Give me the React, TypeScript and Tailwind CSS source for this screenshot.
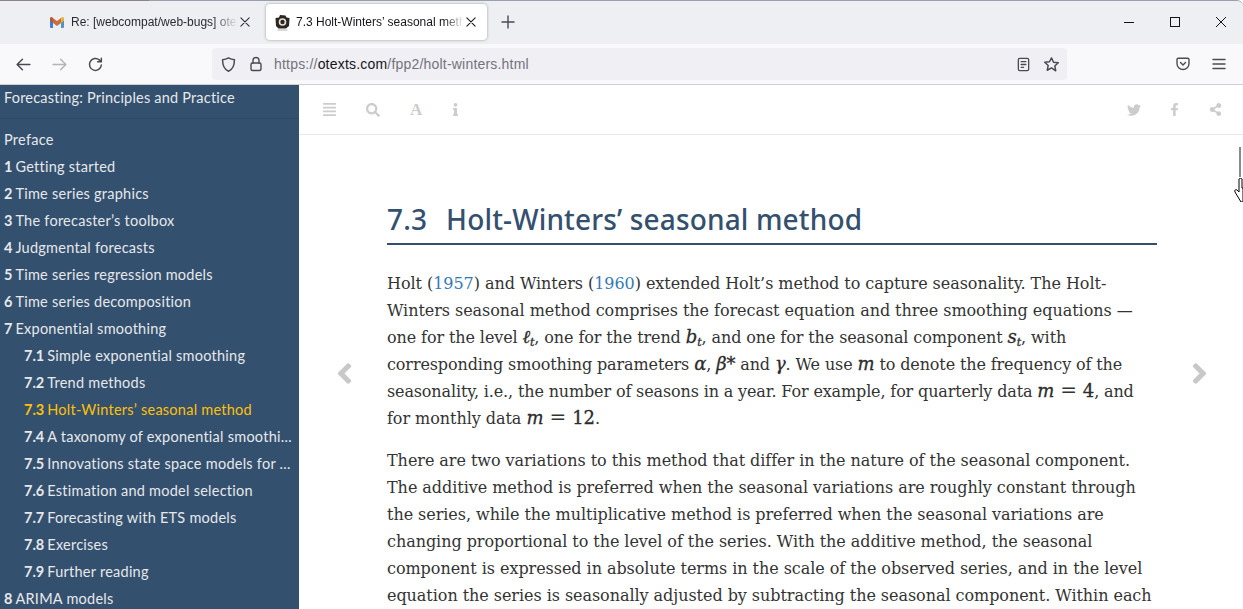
import React from "react";
import { FaAlignJustify, FaSearch, FaInfo, FaTwitter, FaFacebookF, FaShareAlt, FaAngleLeft, FaAngleRight } from "react-icons/fa";

const Stroke = ({ children, size = 16, className = "" }: { children: React.ReactNode; size?: number; className?: string }) => (
  <svg width={size} height={size} viewBox="0 0 16 16" fill="none" stroke="currentColor" strokeWidth="1.4" strokeLinecap="round" strokeLinejoin="round" className={className}>
    {children}
  </svg>
);

const Gmail = () => (
  <svg width="14" height="11" viewBox="0 0 14 11">
    <path d="M0 1.500V10a1 1 0 0 0 1 1h2V4.500z" fill="#3f7fd6" />
    <path d="M14 1.500V10a1 1 0 0 1-1 1h-2V4.500z" fill="#4f95c9" />
    <path d="M3 6V1L7 4l4-3v5L7 9z" fill="#c9703c" />
    <path d="M0 1.500C0 .3 1.400-.4 2.400.4L3 1v5L0 3.500z" fill="#b5573a" />
    <path d="M14 1.500c0-1.200-1.400-1.900-2.400-1.100L11 1v5l3-2.500z" fill="#e9b437" />
  </svg>
);

const Favicon = () => (
  <svg width="17" height="17" viewBox="0 0 17 17">
    <path d="M1.500 4 5 3.500 6 1l5.500.5 1 2 3 .5-.5 8-3 2.500H4.500L2 12z" fill="#2b2523" />
    <circle cx="8.500" cy="8" r="3.800" fill="#e8e2da" />
    <circle cx="8.500" cy="8" r="2.200" fill="#2b2523" />
    <rect x="3.500" y="15.500" width="10" height="1" fill="#b9b4ae" />
  </svg>
);

const side = [
  ["", "Preface", 0],
  ["1", "Getting started", 0],
  ["2", "Time series graphics", 0],
  ["3", "The forecaster’s toolbox", 0],
  ["4", "Judgmental forecasts", 0],
  ["5", "Time series regression models", 0],
  ["6", "Time series decomposition", 0],
  ["7", "Exponential smoothing", 0],
  ["7.1", "Simple exponential smoothing", 1],
  ["7.2", "Trend methods", 1],
  ["7.3", "Holt-Winters’ seasonal method", 2],
  ["7.4", "A taxonomy of exponential smoothing methods", 1],
  ["7.5", "Innovations state space models for exponential smoothing", 1],
  ["7.6", "Estimation and model selection", 1],
  ["7.7", "Forecasting with ETS models", 1],
  ["7.8", "Exercises", 1],
  ["7.9", "Further reading", 1],
  ["8", "ARIMA models", 0],
] as const;

const M = ({ children }: { children: React.ReactNode }) => (
  <span className="italic leading-[0] [font-family:'DejaVu_Serif',serif] text-[18px] text-[#2c2c2c] [-webkit-text-stroke:0.3px_#2c2c2c]">{children}</span>
);
const N = ({ children }: { children: React.ReactNode }) => (
  <span className="leading-[0] [font-family:'DejaVu_Serif',serif] text-[18px] text-[#2c2c2c] [-webkit-text-stroke:0.3px_#2c2c2c]">{children}</span>
);
const Sub = ({ children }: { children: React.ReactNode }) => (
  <sub className="italic leading-[0] [font-family:'DejaVu_Serif',serif] text-[11px]">{children}</sub>
);
const Eq = () => <span className="leading-[0] text-[20px] mx-[1px]">=</span>;
const A = ({ children }: { children: React.ReactNode }) => <span className="text-[#337ab7]">{children}</span>;
const L = ({ children, className = "" }: { children: React.ReactNode; className?: string }) => <div className={`h-[27px] ${className}`}>{children}</div>;

export default function App() {
  return (
    <div className="relative w-[1243px] h-[609px] overflow-hidden bg-white flex flex-col [font-family:'Liberation_Sans',sans-serif]">
      <div className="h-[44px] shrink-0 bg-[#eeeff3] border-t border-[#9aa0aa] rounded-tr-[6px] flex items-start pl-[40px] relative">
        <div className="absolute left-0 top-[-1px] w-[149px] h-px bg-[#8d8583]" />
        <div className="w-[212px] h-[36px] mt-[3px] flex items-center pl-[10px] pr-px text-[12px] text-[#2b2a33]">
          <Gmail />
          <span className="ml-[7px] w-[167px] overflow-hidden whitespace-nowrap [mask-image:linear-gradient(to_right,black_85%,transparent)]">Re: [webcompat/web-bugs] otexts.com</span>
          <Stroke size={12} className="ml-auto"><path d="M2.500 2.500l11 11M13.500 2.500l-11 11" /></Stroke>
        </div>
        <div className="ml-[14px] w-[221px] h-[36px] mt-[3px] bg-white rounded-[4px] shadow-[0_0_3px_rgba(0,0,0,0.35)] flex items-center pl-[8px] pr-[10px] text-[12px] text-[#15141a]">
          <Favicon />
          <span className="ml-[5px] w-[168px] overflow-hidden whitespace-nowrap [mask-image:linear-gradient(to_right,black_88%,transparent)]">7.3 Holt-Winters’ seasonal method</span>
          <Stroke size={12} className="ml-auto"><path d="M2.500 2.500l11 11M13.500 2.500l-11 11" /></Stroke>
        </div>
        <div className="ml-[13px] mt-[13px] text-[#4a4a55]"><Stroke size={16}><path d="M8 2v12M2 8h12" /></Stroke></div>
        <div className="ml-auto flex items-center text-[#15141a] mt-[13px] pr-[14px] gap-[30px]">
          <svg width="16" height="16" viewBox="0 0 16 16" stroke="currentColor" fill="none"><path d="M3 8.500h10" /></svg>
          <svg width="16" height="16" viewBox="0 0 16 16" stroke="currentColor" fill="none"><rect x="3.500" y="3.500" width="9" height="9" /></svg>
          <svg width="16" height="16" viewBox="0 0 16 16" stroke="currentColor" fill="none"><path d="M3 3l10 10M13 3L3 13" /></svg>
        </div>
      </div>
      <div className="h-[41px] shrink-0 bg-[#f9f9fb] border-b border-[#cfcfd8] flex items-center pl-[15px] text-[#4a4a55]">
        <Stroke size={17}><path d="M14 8H2.500M7 3L2 8l5 5" /></Stroke>
        <Stroke size={17} className="ml-[19px] text-[#b4b4bb]"><path d="M2 8h11.500M9 3l5 5-5 5" /></Stroke>
        <Stroke size={17} className="ml-[19px]"><path d="M13.500 8.500A5.600 5.600 0 1 1 11.500 3.600L13.500 5.500M13.500 2v3.500H10" /></Stroke>
        <div className="ml-[108px] w-[855px] h-[32px] rounded-[4px] bg-[#f0f0f4] flex items-center pl-[8px] pr-[7px]">
          <Stroke size={17}><path d="M8 1.800c2 1.200 3.800 1.600 5.600 1.700 0 5-1.400 9-5.600 10.800C3.800 12.500 2.400 8.500 2.400 3.500 4.200 3.400 6 3 8 1.800z" /></Stroke>
          <Stroke size={16} className="ml-[11px]"><rect x="3" y="7" width="10" height="7.500" rx="1.500" /><path d="M5 7V4.500a3 3 0 0 1 6 0V7" /></Stroke>
          <span className="ml-[10px] pt-px text-[14px] tracking-[0.2px] text-[#73737c]">https://<span className="text-[#15141a]">otexts.com</span>/fpp2/holt-winters.html</span>
          <Stroke size={15} className="ml-auto"><rect x="2.500" y="1.500" width="11" height="13" rx="1.500" /><path d="M5.500 5h5M5.500 8h5M5.500 11h2.500" /></Stroke>
          <Stroke size={17} className="ml-[12px]"><path d="M8 1.800l1.900 4.100 4.500.5-3.300 3 .9 4.500L8 11.200l-4 2.200.9-4.500-3.300-3 4.500-.5z" /></Stroke>
        </div>
        <Stroke size={16} className="ml-[108px]"><path d="M2 3.500c0-.8.600-1.300 1.300-1.300h9.400c.7 0 1.300.5 1.300 1.300V7.500a6 6 0 0 1-12 0zM5.500 6.500L8 9l2.500-2.500" /></Stroke>
        <Stroke size={16} className="ml-[20px]"><path d="M2 3.500h12M2 8h12M2 12.500h12" /></Stroke>
      </div>
      <div className="flex-1 flex min-h-0">
        <aside className="w-[299px] shrink-0 bg-[#34506f] text-[#e6e8ea] text-[14.5px] overflow-hidden [font-family:'Lato',sans-serif] tracking-[0.25px]">
          <div className="h-[34px] pl-[4px] pt-[3px] text-[14.5px] leading-[20px] border-b border-[#2f4963] tracking-[0.2px]">Forecasting: Principles and Practice</div>
          <div className="pt-[7px]">
            {side.map(([n, t, k]) => (
              <div key={n + t} className={`h-[27px] leading-[27px] truncate pr-[4px] ${k ? "pl-[24px]" : "pl-[4px]"} ${k === 2 ? "text-[#ffc107]" : ""}`}>
                {n && <b className="font-bold mr-[3px] tracking-normal">{n}</b>}{t}
              </div>
            ))}
          </div>
        </aside>
        <main className="flex-1 min-w-0 flex flex-col">
          <div className="h-[50px] shrink-0 border-b border-[#e9e9e9] flex items-center text-[#cccccc] pl-[23px] pr-[21px]">
            <FaAlignJustify size={15} />
            <FaSearch size={14} className="ml-[29px]" />
            <span className="ml-[30px] w-[13px] text-[17px] leading-none font-bold [font-family:'Liberation_Serif',serif]">A</span>
            <FaInfo size={13} className="ml-[26px]" />
            <FaTwitter size={14} className="ml-auto" />
            <FaFacebookF size={13} className="ml-[27px]" />
            <FaShareAlt size={13} className="ml-[28px]" />
          </div>
          <div className="flex-1 min-h-0 flex">
            <div className="w-[88px] shrink-0 flex items-center pl-[29px] pt-[3px] text-[#c8c8c8]"><FaAngleLeft size={33} /></div>
            <article className="w-[770px] shrink-0 pt-[66px]">
              <h1 className="h-[44px] text-[28px] leading-[37px] font-medium text-[#34506f] border-b-2 border-[#34506f] whitespace-nowrap [font-family:'Noto_Sans',sans-serif] tracking-[0.15px]">
                <span className="mr-[19px]">7.3</span>Holt-Winters’ seasonal method
              </h1>
              <div className="mt-[25px] text-[16px] leading-[27px] text-[#333333] whitespace-nowrap [font-family:'DejaVu_Serif',serif] tracking-[-0.05px]">
                <L>Holt (<A>1957</A>) and Winters (<A>1960</A>) extended Holt’s method to capture seasonality. The Holt-</L>
                <L>Winters seasonal method comprises the forecast equation and three smoothing equations —</L>
                <L className="tracking-[-0.1px]">one for the level <M>ℓ<Sub>t</Sub></M>, one for the trend <M>b<Sub>t</Sub></M>, and one for the seasonal component <M>s<Sub>t</Sub></M>, with</L>
                <L className="tracking-[-0.12px]">corresponding smoothing parameters <M>α</M>, <M>β*</M> and <M>γ</M>. We use <M>m</M> to denote the frequency of the</L>
                <L className="tracking-[-0.14px]">seasonality, i.e., the number of seasons in a year. For example, for quarterly data <M>m</M> <Eq /> <N>4</N>, and</L>
                <L>for monthly data <M>m</M> <Eq /> <N>12</N>.</L>
                <L className="mt-[15px]">There are two variations to this method that differ in the nature of the seasonal component.</L>
                <L>The additive method is preferred when the seasonal variations are roughly constant through</L>
                <L>the series, while the multiplicative method is preferred when the seasonal variations are</L>
                <L>changing proportional to the level of the series. With the additive method, the seasonal</L>
                <L>component is expressed in absolute terms in the scale of the observed series, and in the level</L>
                <L>equation the series is seasonally adjusted by subtracting the seasonal component. Within each</L>
              </div>
            </article>
            <div className="flex-1 flex items-center pl-[26px] pt-[3px] text-[#c8c8c8]"><FaAngleRight size={33} /></div>
          </div>
        </main>
      </div>
      <div className="absolute left-[1239px] top-[147px] w-[2px] h-[30px] bg-[#8a8a8a]" />
      <svg className="absolute left-[1234px] top-[178px]" width="9" height="24" viewBox="0 0 9 24" fill="#fff" stroke="#000"><path d="M5 1c1-1 2-1 3 0v9h1v14H7L1 14c-1-2 1-3 2-2l2 2z" /></svg>
    </div>
  );
}
